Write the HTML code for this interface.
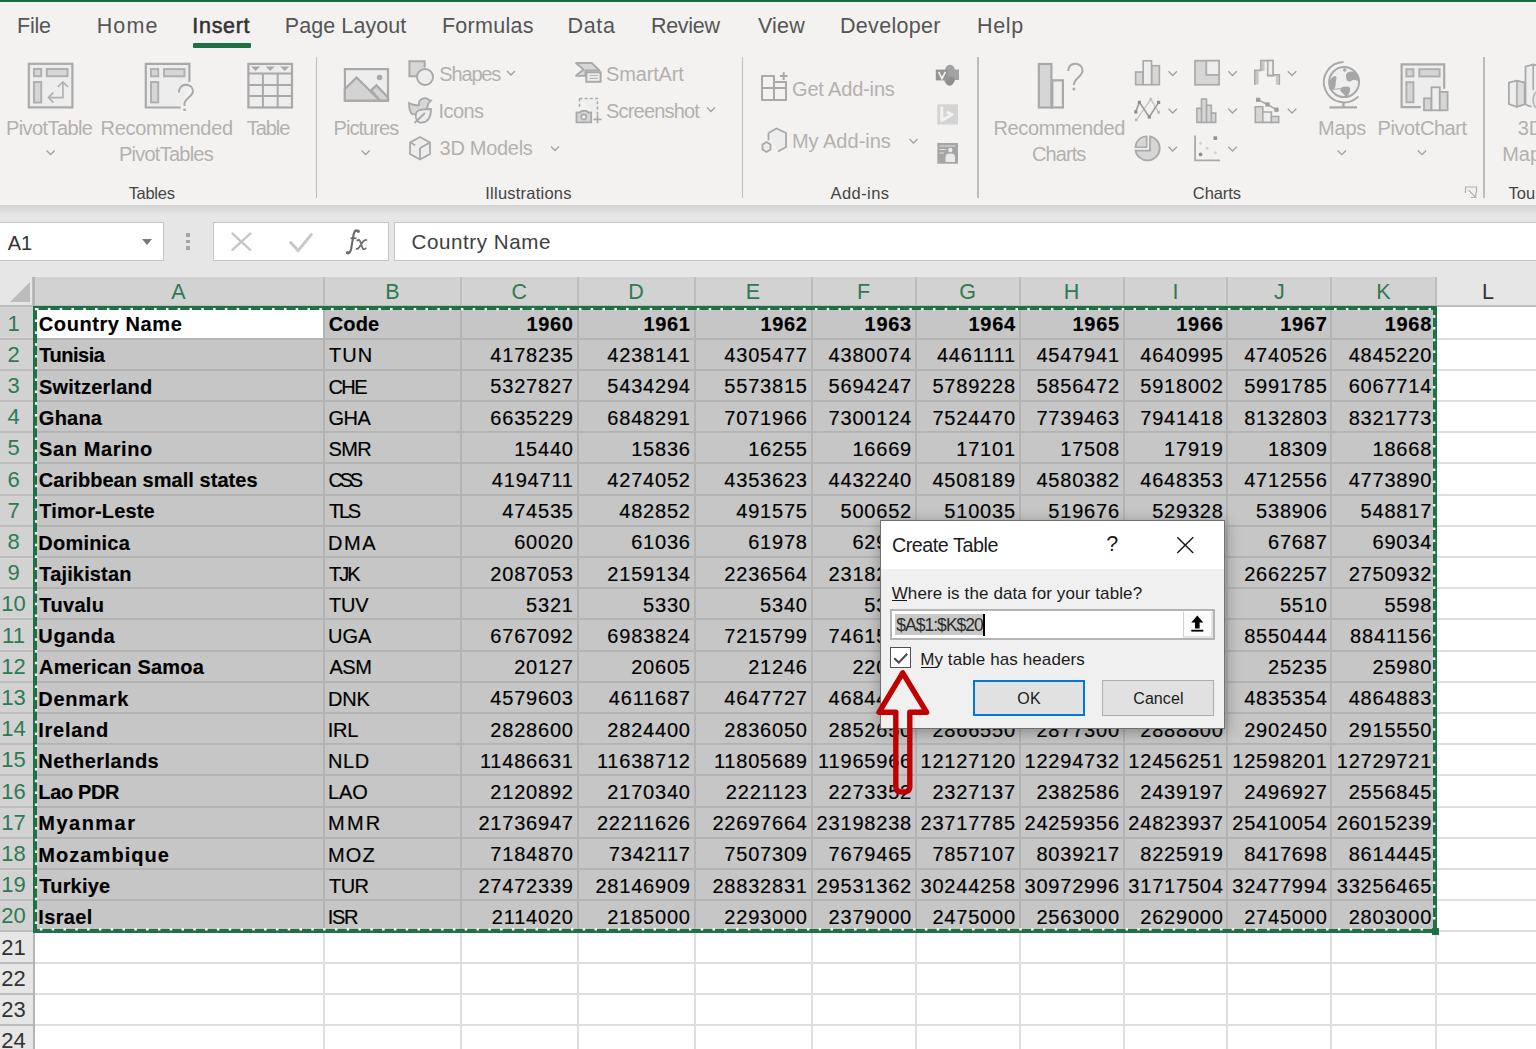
<!DOCTYPE html><html><head><meta charset="utf-8"><style>
*{margin:0;padding:0;box-sizing:border-box}
html,body{width:1536px;height:1049px;overflow:hidden;background:#fff;font-family:"Liberation Sans", sans-serif}
.a{position:absolute}
.t{position:absolute;white-space:nowrap}
.rb{color:#a8a8a8;font-size:19px}
.gl{color:#444;font-size:16.5px}
.tab{position:absolute;top:10px;font-size:21.5px;color:#484848;white-space:nowrap}
.cell{position:absolute;white-space:nowrap;font-size:20px;letter-spacing:1px;color:#000;-webkit-text-stroke:0.18px #000;height:31.2px;line-height:31.2px}
.b{font-weight:bold;-webkit-text-stroke:0.15px #000}
.rh{position:absolute;left:0;width:34px;font-size:22px;text-align:center;height:31.2px;line-height:31.2px}
.ch{position:absolute;top:277px;height:29px;line-height:30px;font-size:21.5px;text-align:center}
.sep{position:absolute;width:1.5px;background:#bebcba;top:57px;height:141px}
</style></head><body>

<div class="a" style="left:0;top:0;width:1536px;height:1.6px;background:#1e6b41"></div>
<div class="a" style="left:0;top:2px;width:1536px;height:203px;background:#f3f2f1"></div>
<div class="t" style="left:17.00px;top:15.50px;font-size:21.50px;line-height:21.50px;letter-spacing:-0.250px;color:#555;">File</div>
<div class="t" style="left:96.75px;top:15.50px;font-size:21.50px;line-height:21.50px;letter-spacing:1.083px;color:#555;">Home</div>
<div class="t" style="left:284.85px;top:15.50px;font-size:21.50px;line-height:21.50px;letter-spacing:0.065px;color:#555;">Page Layout</div>
<div class="t" style="left:441.95px;top:15.50px;font-size:21.50px;line-height:21.50px;letter-spacing:0.286px;color:#555;">Formulas</div>
<div class="t" style="left:567.55px;top:15.50px;font-size:21.50px;line-height:21.50px;letter-spacing:0.650px;color:#555;">Data</div>
<div class="t" style="left:650.95px;top:15.50px;font-size:21.50px;line-height:21.50px;letter-spacing:-0.290px;color:#555;">Review</div>
<div class="t" style="left:758.00px;top:15.50px;font-size:21.50px;line-height:21.50px;letter-spacing:0.167px;color:#555;">View</div>
<div class="t" style="left:839.95px;top:15.50px;font-size:21.50px;line-height:21.50px;letter-spacing:0.319px;color:#555;">Developer</div>
<div class="t" style="left:976.95px;top:15.50px;font-size:21.50px;line-height:21.50px;letter-spacing:0.667px;color:#555;">Help</div>
<div class="t" style="left:192.30px;top:15.50px;font-size:21.50px;line-height:21.50px;letter-spacing:0.700px;color:#333;-webkit-text-stroke:0.55px #333;">Insert</div>
<div class="a" style="left:193.4px;top:43px;width:57.3px;height:4.6px;background:#1e7145;border-radius:1px"></div>
<div class="sep" style="left:315.7px"></div>
<div class="sep" style="left:741.8px"></div>
<div class="sep" style="left:977.1px"></div>
<div class="sep" style="left:1483.0px"></div>
<div class="t" style="left:128.65px;top:184.53px;font-size:16.50px;line-height:16.50px;letter-spacing:-0.290px;color:#444;">Tables</div>
<div class="t" style="left:485.30px;top:184.53px;font-size:16.50px;line-height:16.50px;letter-spacing:0.225px;color:#444;">Illustrations</div>
<div class="t" style="left:830.60px;top:184.53px;font-size:16.50px;line-height:16.50px;letter-spacing:0.417px;color:#444;">Add-ins</div>
<div class="t" style="left:1192.85px;top:184.53px;font-size:16.50px;line-height:16.50px;letter-spacing:-0.110px;color:#444;">Charts</div>
<div class="t" style="left:1508.55px;top:184.53px;font-size:16.50px;line-height:16.50px;letter-spacing:0.000px;color:#444;">Tou</div>
<div class="t" style="left:6.00px;top:118.17px;font-size:20.00px;line-height:20.00px;letter-spacing:-0.594px;color:#b3b0ae;">PivotTable</div>
<div class="t" style="left:100.50px;top:118.17px;font-size:20.00px;line-height:20.00px;letter-spacing:-0.305px;color:#b3b0ae;">Recommended</div>
<div class="t" style="left:118.90px;top:143.97px;font-size:20.00px;line-height:20.00px;letter-spacing:-0.745px;color:#b3b0ae;">PivotTables</div>
<div class="t" style="left:246.80px;top:118.17px;font-size:20.00px;line-height:20.00px;letter-spacing:-1.088px;color:#b3b0ae;">Table</div>
<div class="t" style="left:333.50px;top:118.27px;font-size:20.00px;line-height:20.00px;letter-spacing:-0.943px;color:#b3b0ae;">Pictures</div>
<div class="t" style="left:439.30px;top:63.67px;font-size:20.00px;line-height:20.00px;letter-spacing:-1.160px;color:#b3b0ae;">Shapes</div>
<div class="t" style="left:438.55px;top:100.87px;font-size:20.00px;line-height:20.00px;letter-spacing:-0.588px;color:#b3b0ae;">Icons</div>
<div class="t" style="left:439.55px;top:138.37px;font-size:20.00px;line-height:20.00px;letter-spacing:-0.288px;color:#b3b0ae;">3D Models</div>
<div class="t" style="left:606.00px;top:63.67px;font-size:20.00px;line-height:20.00px;letter-spacing:-0.150px;color:#b3b0ae;">SmartArt</div>
<div class="t" style="left:606.00px;top:100.87px;font-size:20.00px;line-height:20.00px;letter-spacing:-0.806px;color:#b3b0ae;">Screenshot</div>
<div class="t" style="left:792.00px;top:79.27px;font-size:20.00px;line-height:20.00px;letter-spacing:-0.165px;color:#b3b0ae;">Get Add-ins</div>
<div class="t" style="left:791.90px;top:131.27px;font-size:20.00px;line-height:20.00px;letter-spacing:0.006px;color:#b3b0ae;">My Add-ins</div>
<div class="t" style="left:993.50px;top:118.17px;font-size:20.00px;line-height:20.00px;letter-spacing:-0.375px;color:#b3b0ae;">Recommended</div>
<div class="t" style="left:1032.00px;top:143.97px;font-size:20.00px;line-height:20.00px;letter-spacing:-0.910px;color:#b3b0ae;">Charts</div>
<div class="t" style="left:1318.10px;top:118.17px;font-size:20.00px;line-height:20.00px;letter-spacing:-0.250px;color:#b3b0ae;">Maps</div>
<div class="t" style="left:1377.50px;top:118.17px;font-size:20.00px;line-height:20.00px;letter-spacing:-0.417px;color:#b3b0ae;">PivotChart</div>
<div class="t" style="left:1517.75px;top:118.17px;font-size:20.00px;line-height:20.00px;letter-spacing:0.000px;color:#b3b0ae;">3D</div>
<div class="t" style="left:1502.20px;top:144.27px;font-size:20.00px;line-height:20.00px;letter-spacing:0.000px;color:#b3b0ae;">Maps</div>
<div class="a" style="left:0;top:205px;width:1536px;height:72px;background:#e6e6e6"></div>
<div class="a" style="left:0;top:205px;width:1536px;height:10px;background:linear-gradient(#d2d2d2,#e6e6e6)"></div>
<div class="a" style="left:-3px;top:222.3px;width:166.5px;height:38.5px;background:#fff;border:1.5px solid #c6c6c6"></div>
<div class="t" style="left:7.80px;top:232.57px;font-size:20.00px;line-height:20.00px;letter-spacing:-0.050px;color:#333;">A1</div>
<div class="a" style="left:142px;top:238.5px;width:0;height:0;border-left:5.2px solid transparent;border-right:5.2px solid transparent;border-top:6px solid #7a7a7a"></div>
<div class="a" style="left:186px;top:233.0px;width:3.5px;height:3.5px;background:#a6a6a6"></div>
<div class="a" style="left:186px;top:239.5px;width:3.5px;height:3.5px;background:#a6a6a6"></div>
<div class="a" style="left:186px;top:246.0px;width:3.5px;height:3.5px;background:#a6a6a6"></div>
<div class="a" style="left:212.5px;top:222.3px;width:176.5px;height:38.5px;background:#fff;border:1.5px solid #c6c6c6"></div>
<svg class="a" style="left:215px;top:222px" width="175" height="40"><path d="M17.5 11.6 L35.3 27.8 M35.3 11.6 L17.5 27.8" stroke="#c6c6c6" stroke-width="2.4" fill="none" stroke-linecap="round"/><path d="M75.6 20.5 L83.2 28.6 L96.3 12.5" stroke="#c8c8c8" stroke-width="3" fill="none" stroke-linecap="round" stroke-linejoin="round"/></svg>
<svg class="a" style="left:340px;top:222px" width="35" height="40"><path d="M17.6 8.5 C15.5 8 14.3 9.5 13.7 12 L11.2 26.5 C10.5 30 9.5 31.6 7.6 31.3" stroke="#6a6a6a" stroke-width="2.1" fill="none" stroke-linecap="round"/><path d="M10.5 16.3 H16.5" stroke="#6a6a6a" stroke-width="1.7"/><circle cx="18.3" cy="9.3" r="1.6" fill="#6a6a6a"/><circle cx="7.5" cy="30.5" r="1.6" fill="#6a6a6a"/><path d="M17.3 18.5 C18.5 17.5 19.5 17.5 20.2 19.5 L22.5 26 C23 27.3 24 27.7 25.8 26.3 M26.5 18 C25 17.5 24 18 22.5 20.5 L19.5 24.8 C18.5 26.5 17.5 27.3 16.5 26.8" stroke="#6a6a6a" stroke-width="1.7" fill="none" stroke-linecap="round"/></svg>
<div class="a" style="left:393.8px;top:222.3px;width:1150px;height:38.5px;background:#fff;border:1.5px solid #c6c6c6"></div>
<div class="t" style="left:411.50px;top:232.36px;font-size:20.60px;line-height:20.60px;letter-spacing:0.568px;color:#404040;">Country Name</div>
<div class="a" style="left:0;top:277px;width:1536px;height:30px;background:#e6e6e6"></div>
<div class="a" style="left:34px;top:277px;width:1401.8px;height:29px;background:#d2d2d2"></div>
<div class="a" style="left:0;top:306.7px;width:34px;height:624.0px;background:#d2d2d2"></div>
<div class="a" style="left:0;top:931.3px;width:34px;height:200px;background:#e6e6e6"></div>
<div class="a" style="left:34px;top:306.7px;width:1510px;height:750px;background:#fff"></div>
<div class="a" style="left:33.0px;top:307.3px;width:1402.8px;height:624.0px;background:#c6c6c6"></div>
<div class="a" style="left:33.0px;top:307.3px;width:291.0px;height:31.2px;background:#fff"></div>
<div class="a" style="left:35px;top:338px;width:1400.8px;height:2px;background:#b3b3b3"></div>
<div class="a" style="left:1435.8px;top:338px;width:200px;height:2px;background:#dedede"></div>
<div class="a" style="left:0;top:338px;width:34px;height:2px;background:#bcbcbc"></div>
<div class="a" style="left:35px;top:369px;width:1400.8px;height:2px;background:#b3b3b3"></div>
<div class="a" style="left:1435.8px;top:369px;width:200px;height:2px;background:#dedede"></div>
<div class="a" style="left:0;top:369px;width:34px;height:2px;background:#bcbcbc"></div>
<div class="a" style="left:35px;top:400px;width:1400.8px;height:2px;background:#b3b3b3"></div>
<div class="a" style="left:1435.8px;top:400px;width:200px;height:2px;background:#dedede"></div>
<div class="a" style="left:0;top:400px;width:34px;height:2px;background:#bcbcbc"></div>
<div class="a" style="left:35px;top:431px;width:1400.8px;height:2px;background:#b3b3b3"></div>
<div class="a" style="left:1435.8px;top:431px;width:200px;height:2px;background:#dedede"></div>
<div class="a" style="left:0;top:431px;width:34px;height:2px;background:#bcbcbc"></div>
<div class="a" style="left:35px;top:462px;width:1400.8px;height:2px;background:#b3b3b3"></div>
<div class="a" style="left:1435.8px;top:462px;width:200px;height:2px;background:#dedede"></div>
<div class="a" style="left:0;top:462px;width:34px;height:2px;background:#bcbcbc"></div>
<div class="a" style="left:35px;top:494px;width:1400.8px;height:2px;background:#b3b3b3"></div>
<div class="a" style="left:1435.8px;top:494px;width:200px;height:2px;background:#dedede"></div>
<div class="a" style="left:0;top:494px;width:34px;height:2px;background:#bcbcbc"></div>
<div class="a" style="left:35px;top:525px;width:1400.8px;height:2px;background:#b3b3b3"></div>
<div class="a" style="left:1435.8px;top:525px;width:200px;height:2px;background:#dedede"></div>
<div class="a" style="left:0;top:525px;width:34px;height:2px;background:#bcbcbc"></div>
<div class="a" style="left:35px;top:556px;width:1400.8px;height:2px;background:#b3b3b3"></div>
<div class="a" style="left:1435.8px;top:556px;width:200px;height:2px;background:#dedede"></div>
<div class="a" style="left:0;top:556px;width:34px;height:2px;background:#bcbcbc"></div>
<div class="a" style="left:35px;top:587px;width:1400.8px;height:2px;background:#b3b3b3"></div>
<div class="a" style="left:1435.8px;top:587px;width:200px;height:2px;background:#dedede"></div>
<div class="a" style="left:0;top:587px;width:34px;height:2px;background:#bcbcbc"></div>
<div class="a" style="left:35px;top:618px;width:1400.8px;height:2px;background:#b3b3b3"></div>
<div class="a" style="left:1435.8px;top:618px;width:200px;height:2px;background:#dedede"></div>
<div class="a" style="left:0;top:618px;width:34px;height:2px;background:#bcbcbc"></div>
<div class="a" style="left:35px;top:650px;width:1400.8px;height:2px;background:#b3b3b3"></div>
<div class="a" style="left:1435.8px;top:650px;width:200px;height:2px;background:#dedede"></div>
<div class="a" style="left:0;top:650px;width:34px;height:2px;background:#bcbcbc"></div>
<div class="a" style="left:35px;top:681px;width:1400.8px;height:2px;background:#b3b3b3"></div>
<div class="a" style="left:1435.8px;top:681px;width:200px;height:2px;background:#dedede"></div>
<div class="a" style="left:0;top:681px;width:34px;height:2px;background:#bcbcbc"></div>
<div class="a" style="left:35px;top:712px;width:1400.8px;height:2px;background:#b3b3b3"></div>
<div class="a" style="left:1435.8px;top:712px;width:200px;height:2px;background:#dedede"></div>
<div class="a" style="left:0;top:712px;width:34px;height:2px;background:#bcbcbc"></div>
<div class="a" style="left:35px;top:743px;width:1400.8px;height:2px;background:#b3b3b3"></div>
<div class="a" style="left:1435.8px;top:743px;width:200px;height:2px;background:#dedede"></div>
<div class="a" style="left:0;top:743px;width:34px;height:2px;background:#bcbcbc"></div>
<div class="a" style="left:35px;top:774px;width:1400.8px;height:2px;background:#b3b3b3"></div>
<div class="a" style="left:1435.8px;top:774px;width:200px;height:2px;background:#dedede"></div>
<div class="a" style="left:0;top:774px;width:34px;height:2px;background:#bcbcbc"></div>
<div class="a" style="left:35px;top:806px;width:1400.8px;height:2px;background:#b3b3b3"></div>
<div class="a" style="left:1435.8px;top:806px;width:200px;height:2px;background:#dedede"></div>
<div class="a" style="left:0;top:806px;width:34px;height:2px;background:#bcbcbc"></div>
<div class="a" style="left:35px;top:837px;width:1400.8px;height:2px;background:#b3b3b3"></div>
<div class="a" style="left:1435.8px;top:837px;width:200px;height:2px;background:#dedede"></div>
<div class="a" style="left:0;top:837px;width:34px;height:2px;background:#bcbcbc"></div>
<div class="a" style="left:35px;top:868px;width:1400.8px;height:2px;background:#b3b3b3"></div>
<div class="a" style="left:1435.8px;top:868px;width:200px;height:2px;background:#dedede"></div>
<div class="a" style="left:0;top:868px;width:34px;height:2px;background:#bcbcbc"></div>
<div class="a" style="left:35px;top:899px;width:1400.8px;height:2px;background:#b3b3b3"></div>
<div class="a" style="left:1435.8px;top:899px;width:200px;height:2px;background:#dedede"></div>
<div class="a" style="left:0;top:899px;width:34px;height:2px;background:#bcbcbc"></div>
<div class="a" style="left:35px;top:930px;width:1400.8px;height:2px;background:#b3b3b3"></div>
<div class="a" style="left:1435.8px;top:930px;width:200px;height:2px;background:#dedede"></div>
<div class="a" style="left:0;top:930px;width:34px;height:2px;background:#bcbcbc"></div>
<div class="a" style="left:35px;top:962px;width:1510px;height:2px;background:#dedede"></div>
<div class="a" style="left:0;top:962px;width:34px;height:2px;background:#bcbcbc"></div>
<div class="a" style="left:35px;top:993px;width:1510px;height:2px;background:#dedede"></div>
<div class="a" style="left:0;top:993px;width:34px;height:2px;background:#bcbcbc"></div>
<div class="a" style="left:35px;top:1024px;width:1510px;height:2px;background:#dedede"></div>
<div class="a" style="left:0;top:1024px;width:34px;height:2px;background:#bcbcbc"></div>
<div class="a" style="left:35px;top:1055px;width:1510px;height:2px;background:#dedede"></div>
<div class="a" style="left:0;top:1055px;width:34px;height:2px;background:#bcbcbc"></div>
<div class="a" style="left:32px;top:277px;width:2px;height:29.5px;background:#bdbdbd"></div>
<div class="a" style="left:323px;top:307.3px;width:2px;height:624.0px;background:#b3b3b3"></div>
<div class="a" style="left:323px;top:931.3px;width:2px;height:200px;background:#dedede"></div>
<div class="a" style="left:323px;top:277px;width:2px;height:29.5px;background:#bdbdbd"></div>
<div class="a" style="left:460px;top:307.3px;width:2px;height:624.0px;background:#b3b3b3"></div>
<div class="a" style="left:460px;top:931.3px;width:2px;height:200px;background:#dedede"></div>
<div class="a" style="left:460px;top:277px;width:2px;height:29.5px;background:#bdbdbd"></div>
<div class="a" style="left:577px;top:307.3px;width:2px;height:624.0px;background:#b3b3b3"></div>
<div class="a" style="left:577px;top:931.3px;width:2px;height:200px;background:#dedede"></div>
<div class="a" style="left:577px;top:277px;width:2px;height:29.5px;background:#bdbdbd"></div>
<div class="a" style="left:694px;top:307.3px;width:2px;height:624.0px;background:#b3b3b3"></div>
<div class="a" style="left:694px;top:931.3px;width:2px;height:200px;background:#dedede"></div>
<div class="a" style="left:694px;top:277px;width:2px;height:29.5px;background:#bdbdbd"></div>
<div class="a" style="left:811px;top:307.3px;width:2px;height:624.0px;background:#b3b3b3"></div>
<div class="a" style="left:811px;top:931.3px;width:2px;height:200px;background:#dedede"></div>
<div class="a" style="left:811px;top:277px;width:2px;height:29.5px;background:#bdbdbd"></div>
<div class="a" style="left:915px;top:307.3px;width:2px;height:624.0px;background:#b3b3b3"></div>
<div class="a" style="left:915px;top:931.3px;width:2px;height:200px;background:#dedede"></div>
<div class="a" style="left:915px;top:277px;width:2px;height:29.5px;background:#bdbdbd"></div>
<div class="a" style="left:1019px;top:307.3px;width:2px;height:624.0px;background:#b3b3b3"></div>
<div class="a" style="left:1019px;top:931.3px;width:2px;height:200px;background:#dedede"></div>
<div class="a" style="left:1019px;top:277px;width:2px;height:29.5px;background:#bdbdbd"></div>
<div class="a" style="left:1123px;top:307.3px;width:2px;height:624.0px;background:#b3b3b3"></div>
<div class="a" style="left:1123px;top:931.3px;width:2px;height:200px;background:#dedede"></div>
<div class="a" style="left:1123px;top:277px;width:2px;height:29.5px;background:#bdbdbd"></div>
<div class="a" style="left:1226px;top:307.3px;width:2px;height:624.0px;background:#b3b3b3"></div>
<div class="a" style="left:1226px;top:931.3px;width:2px;height:200px;background:#dedede"></div>
<div class="a" style="left:1226px;top:277px;width:2px;height:29.5px;background:#bdbdbd"></div>
<div class="a" style="left:1330px;top:307.3px;width:2px;height:624.0px;background:#b3b3b3"></div>
<div class="a" style="left:1330px;top:931.3px;width:2px;height:200px;background:#dedede"></div>
<div class="a" style="left:1330px;top:277px;width:2px;height:29.5px;background:#bdbdbd"></div>
<div class="a" style="left:1435px;top:307.3px;width:2px;height:624.0px;background:#b3b3b3"></div>
<div class="a" style="left:1435px;top:931.3px;width:2px;height:200px;background:#dedede"></div>
<div class="a" style="left:1435px;top:277px;width:2px;height:29.5px;background:#bdbdbd"></div>
<div class="a" style="left:0;top:305px;width:1536px;height:2px;background:#bdbdbd"></div>
<div class="a" style="left:33px;top:277px;width:2px;height:772px;background:#b4b4b4"></div>
<svg class="a" style="left:0;top:277px" width="34" height="30"><path d="M10 25 L30 25 L30 5 Z" fill="#bcbcbc"/></svg>
<div class="ch" style="left:178.5px;width:200px;margin-left:-100px;color:#2f7a52">A</div>
<div class="ch" style="left:392.5px;width:200px;margin-left:-100px;color:#2f7a52">B</div>
<div class="ch" style="left:519.2px;width:200px;margin-left:-100px;color:#2f7a52">C</div>
<div class="ch" style="left:636.0px;width:200px;margin-left:-100px;color:#2f7a52">D</div>
<div class="ch" style="left:753.0px;width:200px;margin-left:-100px;color:#2f7a52">E</div>
<div class="ch" style="left:863.6px;width:200px;margin-left:-100px;color:#2f7a52">F</div>
<div class="ch" style="left:967.7px;width:200px;margin-left:-100px;color:#2f7a52">G</div>
<div class="ch" style="left:1071.6px;width:200px;margin-left:-100px;color:#2f7a52">H</div>
<div class="ch" style="left:1175.5px;width:200px;margin-left:-100px;color:#2f7a52">I</div>
<div class="ch" style="left:1279.3px;width:200px;margin-left:-100px;color:#2f7a52">J</div>
<div class="ch" style="left:1383.5px;width:200px;margin-left:-100px;color:#2f7a52">K</div>
<div class="ch" style="left:1487.9px;width:200px;margin-left:-100px;color:#333">L</div>
<div class="rh" style="top:307.6px;color:#2f7a52;width:27px">1</div>
<div class="rh" style="top:338.8px;color:#2f7a52;width:27px">2</div>
<div class="rh" style="top:370.0px;color:#2f7a52;width:27px">3</div>
<div class="rh" style="top:401.2px;color:#2f7a52;width:27px">4</div>
<div class="rh" style="top:432.4px;color:#2f7a52;width:27px">5</div>
<div class="rh" style="top:463.6px;color:#2f7a52;width:27px">6</div>
<div class="rh" style="top:494.8px;color:#2f7a52;width:27px">7</div>
<div class="rh" style="top:526.0px;color:#2f7a52;width:27px">8</div>
<div class="rh" style="top:557.2px;color:#2f7a52;width:27px">9</div>
<div class="rh" style="top:588.4px;color:#2f7a52;width:27px">10</div>
<div class="rh" style="top:619.6px;color:#2f7a52;width:27px">11</div>
<div class="rh" style="top:650.8px;color:#2f7a52;width:27px">12</div>
<div class="rh" style="top:682.0px;color:#2f7a52;width:27px">13</div>
<div class="rh" style="top:713.2px;color:#2f7a52;width:27px">14</div>
<div class="rh" style="top:744.4px;color:#2f7a52;width:27px">15</div>
<div class="rh" style="top:775.6px;color:#2f7a52;width:27px">16</div>
<div class="rh" style="top:806.8px;color:#2f7a52;width:27px">17</div>
<div class="rh" style="top:838.0px;color:#2f7a52;width:27px">18</div>
<div class="rh" style="top:869.2px;color:#2f7a52;width:27px">19</div>
<div class="rh" style="top:900.4px;color:#2f7a52;width:27px">20</div>
<div class="rh" style="top:931.6px;color:#333;width:27px">21</div>
<div class="rh" style="top:962.8px;color:#333;width:27px">22</div>
<div class="rh" style="top:994.0px;color:#333;width:27px">23</div>
<div class="rh" style="top:1025.2px;color:#333;width:27px">24</div>
<div class="cell b" style="left:38.85px;top:314.27px;height:auto;line-height:20px;letter-spacing:0.568px">Country Name</div>
<div class="cell b" style="left:328.75px;top:314.27px;height:auto;line-height:20px;letter-spacing:0.150px">Code</div>
<div class="cell b" style="left:573.7px;top:309.0px;width:200px;text-align:right;margin-left:-200px;letter-spacing:0.70px">1960</div>
<div class="cell b" style="left:690.7px;top:309.0px;width:200px;text-align:right;margin-left:-200px;letter-spacing:0.70px">1961</div>
<div class="cell b" style="left:807.7px;top:309.0px;width:200px;text-align:right;margin-left:-200px;letter-spacing:0.70px">1962</div>
<div class="cell b" style="left:911.9px;top:309.0px;width:200px;text-align:right;margin-left:-200px;letter-spacing:0.70px">1963</div>
<div class="cell b" style="left:1015.8px;top:309.0px;width:200px;text-align:right;margin-left:-200px;letter-spacing:0.70px">1964</div>
<div class="cell b" style="left:1119.8px;top:309.0px;width:200px;text-align:right;margin-left:-200px;letter-spacing:0.70px">1965</div>
<div class="cell b" style="left:1223.6px;top:309.0px;width:200px;text-align:right;margin-left:-200px;letter-spacing:0.70px">1966</div>
<div class="cell b" style="left:1327.5px;top:309.0px;width:200px;text-align:right;margin-left:-200px;letter-spacing:0.70px">1967</div>
<div class="cell b" style="left:1432.0px;top:309.0px;width:200px;text-align:right;margin-left:-200px;letter-spacing:0.70px">1968</div>
<div class="cell b" style="left:39.35px;top:345.47px;height:auto;line-height:20px;letter-spacing:-0.500px">Tunisia</div>
<div class="cell" style="left:329.00px;top:345.47px;height:auto;line-height:20px;letter-spacing:1.100px">TUN</div>
<div class="cell" style="left:573.8px;top:340.2px;width:200px;text-align:right;margin-left:-200px;letter-spacing:0.80px">4178235</div>
<div class="cell" style="left:690.8px;top:340.2px;width:200px;text-align:right;margin-left:-200px;letter-spacing:0.80px">4238141</div>
<div class="cell" style="left:807.8px;top:340.2px;width:200px;text-align:right;margin-left:-200px;letter-spacing:0.80px">4305477</div>
<div class="cell" style="left:912.0px;top:340.2px;width:200px;text-align:right;margin-left:-200px;letter-spacing:0.80px">4380074</div>
<div class="cell" style="left:1015.9px;top:340.2px;width:200px;text-align:right;margin-left:-200px;letter-spacing:0.80px">4461111</div>
<div class="cell" style="left:1119.9px;top:340.2px;width:200px;text-align:right;margin-left:-200px;letter-spacing:0.80px">4547941</div>
<div class="cell" style="left:1223.7px;top:340.2px;width:200px;text-align:right;margin-left:-200px;letter-spacing:0.80px">4640995</div>
<div class="cell" style="left:1327.6px;top:340.2px;width:200px;text-align:right;margin-left:-200px;letter-spacing:0.80px">4740526</div>
<div class="cell" style="left:1432.1px;top:340.2px;width:200px;text-align:right;margin-left:-200px;letter-spacing:0.80px">4845220</div>
<div class="cell b" style="left:39.10px;top:376.67px;height:auto;line-height:20px;letter-spacing:0.190px">Switzerland</div>
<div class="cell" style="left:328.50px;top:376.67px;height:auto;line-height:20px;letter-spacing:-1.600px">CHE</div>
<div class="cell" style="left:573.8px;top:371.4px;width:200px;text-align:right;margin-left:-200px;letter-spacing:0.80px">5327827</div>
<div class="cell" style="left:690.8px;top:371.4px;width:200px;text-align:right;margin-left:-200px;letter-spacing:0.80px">5434294</div>
<div class="cell" style="left:807.8px;top:371.4px;width:200px;text-align:right;margin-left:-200px;letter-spacing:0.80px">5573815</div>
<div class="cell" style="left:912.0px;top:371.4px;width:200px;text-align:right;margin-left:-200px;letter-spacing:0.80px">5694247</div>
<div class="cell" style="left:1015.9px;top:371.4px;width:200px;text-align:right;margin-left:-200px;letter-spacing:0.80px">5789228</div>
<div class="cell" style="left:1119.9px;top:371.4px;width:200px;text-align:right;margin-left:-200px;letter-spacing:0.80px">5856472</div>
<div class="cell" style="left:1223.7px;top:371.4px;width:200px;text-align:right;margin-left:-200px;letter-spacing:0.80px">5918002</div>
<div class="cell" style="left:1327.6px;top:371.4px;width:200px;text-align:right;margin-left:-200px;letter-spacing:0.80px">5991785</div>
<div class="cell" style="left:1432.1px;top:371.4px;width:200px;text-align:right;margin-left:-200px;letter-spacing:0.80px">6067714</div>
<div class="cell b" style="left:38.85px;top:407.87px;height:auto;line-height:20px;letter-spacing:0.225px">Ghana</div>
<div class="cell" style="left:328.50px;top:407.87px;height:auto;line-height:20px;letter-spacing:-0.525px">GHA</div>
<div class="cell" style="left:573.8px;top:402.6px;width:200px;text-align:right;margin-left:-200px;letter-spacing:0.80px">6635229</div>
<div class="cell" style="left:690.8px;top:402.6px;width:200px;text-align:right;margin-left:-200px;letter-spacing:0.80px">6848291</div>
<div class="cell" style="left:807.8px;top:402.6px;width:200px;text-align:right;margin-left:-200px;letter-spacing:0.80px">7071966</div>
<div class="cell" style="left:912.0px;top:402.6px;width:200px;text-align:right;margin-left:-200px;letter-spacing:0.80px">7300124</div>
<div class="cell" style="left:1015.9px;top:402.6px;width:200px;text-align:right;margin-left:-200px;letter-spacing:0.80px">7524470</div>
<div class="cell" style="left:1119.9px;top:402.6px;width:200px;text-align:right;margin-left:-200px;letter-spacing:0.80px">7739463</div>
<div class="cell" style="left:1223.7px;top:402.6px;width:200px;text-align:right;margin-left:-200px;letter-spacing:0.80px">7941418</div>
<div class="cell" style="left:1327.6px;top:402.6px;width:200px;text-align:right;margin-left:-200px;letter-spacing:0.80px">8132803</div>
<div class="cell" style="left:1432.1px;top:402.6px;width:200px;text-align:right;margin-left:-200px;letter-spacing:0.80px">8321773</div>
<div class="cell b" style="left:39.10px;top:439.07px;height:auto;line-height:20px;letter-spacing:0.600px">San Marino</div>
<div class="cell" style="left:328.50px;top:439.07px;height:auto;line-height:20px;letter-spacing:-0.650px">SMR</div>
<div class="cell" style="left:573.8px;top:433.8px;width:200px;text-align:right;margin-left:-200px;letter-spacing:0.80px">15440</div>
<div class="cell" style="left:690.8px;top:433.8px;width:200px;text-align:right;margin-left:-200px;letter-spacing:0.80px">15836</div>
<div class="cell" style="left:807.8px;top:433.8px;width:200px;text-align:right;margin-left:-200px;letter-spacing:0.80px">16255</div>
<div class="cell" style="left:912.0px;top:433.8px;width:200px;text-align:right;margin-left:-200px;letter-spacing:0.80px">16669</div>
<div class="cell" style="left:1015.9px;top:433.8px;width:200px;text-align:right;margin-left:-200px;letter-spacing:0.80px">17101</div>
<div class="cell" style="left:1119.9px;top:433.8px;width:200px;text-align:right;margin-left:-200px;letter-spacing:0.80px">17508</div>
<div class="cell" style="left:1223.7px;top:433.8px;width:200px;text-align:right;margin-left:-200px;letter-spacing:0.80px">17919</div>
<div class="cell" style="left:1327.6px;top:433.8px;width:200px;text-align:right;margin-left:-200px;letter-spacing:0.80px">18309</div>
<div class="cell" style="left:1432.1px;top:433.8px;width:200px;text-align:right;margin-left:-200px;letter-spacing:0.80px">18668</div>
<div class="cell b" style="left:38.85px;top:470.27px;height:auto;line-height:20px;letter-spacing:0.040px">Caribbean small states</div>
<div class="cell" style="left:328.50px;top:470.27px;height:auto;line-height:20px;letter-spacing:-3.275px">CSS</div>
<div class="cell" style="left:573.8px;top:465.0px;width:200px;text-align:right;margin-left:-200px;letter-spacing:0.80px">4194711</div>
<div class="cell" style="left:690.8px;top:465.0px;width:200px;text-align:right;margin-left:-200px;letter-spacing:0.80px">4274052</div>
<div class="cell" style="left:807.8px;top:465.0px;width:200px;text-align:right;margin-left:-200px;letter-spacing:0.80px">4353623</div>
<div class="cell" style="left:912.0px;top:465.0px;width:200px;text-align:right;margin-left:-200px;letter-spacing:0.80px">4432240</div>
<div class="cell" style="left:1015.9px;top:465.0px;width:200px;text-align:right;margin-left:-200px;letter-spacing:0.80px">4508189</div>
<div class="cell" style="left:1119.9px;top:465.0px;width:200px;text-align:right;margin-left:-200px;letter-spacing:0.80px">4580382</div>
<div class="cell" style="left:1223.7px;top:465.0px;width:200px;text-align:right;margin-left:-200px;letter-spacing:0.80px">4648353</div>
<div class="cell" style="left:1327.6px;top:465.0px;width:200px;text-align:right;margin-left:-200px;letter-spacing:0.80px">4712556</div>
<div class="cell" style="left:1432.1px;top:465.0px;width:200px;text-align:right;margin-left:-200px;letter-spacing:0.80px">4773890</div>
<div class="cell b" style="left:39.35px;top:501.47px;height:auto;line-height:20px;letter-spacing:0.110px">Timor-Leste</div>
<div class="cell" style="left:329.00px;top:501.47px;height:auto;line-height:20px;letter-spacing:-2.275px">TLS</div>
<div class="cell" style="left:573.8px;top:496.2px;width:200px;text-align:right;margin-left:-200px;letter-spacing:0.80px">474535</div>
<div class="cell" style="left:690.8px;top:496.2px;width:200px;text-align:right;margin-left:-200px;letter-spacing:0.80px">482852</div>
<div class="cell" style="left:807.8px;top:496.2px;width:200px;text-align:right;margin-left:-200px;letter-spacing:0.80px">491575</div>
<div class="cell" style="left:912.0px;top:496.2px;width:200px;text-align:right;margin-left:-200px;letter-spacing:0.80px">500652</div>
<div class="cell" style="left:1015.9px;top:496.2px;width:200px;text-align:right;margin-left:-200px;letter-spacing:0.80px">510035</div>
<div class="cell" style="left:1119.9px;top:496.2px;width:200px;text-align:right;margin-left:-200px;letter-spacing:0.80px">519676</div>
<div class="cell" style="left:1223.7px;top:496.2px;width:200px;text-align:right;margin-left:-200px;letter-spacing:0.80px">529328</div>
<div class="cell" style="left:1327.6px;top:496.2px;width:200px;text-align:right;margin-left:-200px;letter-spacing:0.80px">538906</div>
<div class="cell" style="left:1432.1px;top:496.2px;width:200px;text-align:right;margin-left:-200px;letter-spacing:0.80px">548817</div>
<div class="cell b" style="left:38.35px;top:532.67px;height:auto;line-height:20px;letter-spacing:0.200px">Dominica</div>
<div class="cell" style="left:328.00px;top:532.67px;height:auto;line-height:20px;letter-spacing:1.525px">DMA</div>
<div class="cell" style="left:573.8px;top:527.4px;width:200px;text-align:right;margin-left:-200px;letter-spacing:0.80px">60020</div>
<div class="cell" style="left:690.8px;top:527.4px;width:200px;text-align:right;margin-left:-200px;letter-spacing:0.80px">61036</div>
<div class="cell" style="left:807.8px;top:527.4px;width:200px;text-align:right;margin-left:-200px;letter-spacing:0.80px">61978</div>
<div class="cell" style="left:912.0px;top:527.4px;width:200px;text-align:right;margin-left:-200px;letter-spacing:0.80px">62925</div>
<div class="cell" style="left:1015.9px;top:527.4px;width:200px;text-align:right;margin-left:-200px;letter-spacing:0.80px">63814</div>
<div class="cell" style="left:1119.9px;top:527.4px;width:200px;text-align:right;margin-left:-200px;letter-spacing:0.80px">64680</div>
<div class="cell" style="left:1223.7px;top:527.4px;width:200px;text-align:right;margin-left:-200px;letter-spacing:0.80px">65517</div>
<div class="cell" style="left:1327.6px;top:527.4px;width:200px;text-align:right;margin-left:-200px;letter-spacing:0.80px">67687</div>
<div class="cell" style="left:1432.1px;top:527.4px;width:200px;text-align:right;margin-left:-200px;letter-spacing:0.80px">69034</div>
<div class="cell b" style="left:39.35px;top:563.87px;height:auto;line-height:20px;letter-spacing:0.139px">Tajikistan</div>
<div class="cell" style="left:329.00px;top:563.87px;height:auto;line-height:20px;letter-spacing:-2.025px">TJK</div>
<div class="cell" style="left:573.8px;top:558.6px;width:200px;text-align:right;margin-left:-200px;letter-spacing:0.80px">2087053</div>
<div class="cell" style="left:690.8px;top:558.6px;width:200px;text-align:right;margin-left:-200px;letter-spacing:0.80px">2159134</div>
<div class="cell" style="left:807.8px;top:558.6px;width:200px;text-align:right;margin-left:-200px;letter-spacing:0.80px">2236564</div>
<div class="cell" style="left:912.0px;top:558.6px;width:200px;text-align:right;margin-left:-200px;letter-spacing:0.80px">2318291</div>
<div class="cell" style="left:1015.9px;top:558.6px;width:200px;text-align:right;margin-left:-200px;letter-spacing:0.80px">2403511</div>
<div class="cell" style="left:1119.9px;top:558.6px;width:200px;text-align:right;margin-left:-200px;letter-spacing:0.80px">2491620</div>
<div class="cell" style="left:1223.7px;top:558.6px;width:200px;text-align:right;margin-left:-200px;letter-spacing:0.80px">2578450</div>
<div class="cell" style="left:1327.6px;top:558.6px;width:200px;text-align:right;margin-left:-200px;letter-spacing:0.80px">2662257</div>
<div class="cell" style="left:1432.1px;top:558.6px;width:200px;text-align:right;margin-left:-200px;letter-spacing:0.80px">2750932</div>
<div class="cell b" style="left:39.35px;top:595.07px;height:auto;line-height:20px;letter-spacing:0.320px">Tuvalu</div>
<div class="cell" style="left:329.00px;top:595.07px;height:auto;line-height:20px;letter-spacing:-0.150px">TUV</div>
<div class="cell" style="left:573.8px;top:589.8px;width:200px;text-align:right;margin-left:-200px;letter-spacing:0.80px">5321</div>
<div class="cell" style="left:690.8px;top:589.8px;width:200px;text-align:right;margin-left:-200px;letter-spacing:0.80px">5330</div>
<div class="cell" style="left:807.8px;top:589.8px;width:200px;text-align:right;margin-left:-200px;letter-spacing:0.80px">5340</div>
<div class="cell" style="left:912.0px;top:589.8px;width:200px;text-align:right;margin-left:-200px;letter-spacing:0.80px">5354</div>
<div class="cell" style="left:1015.9px;top:589.8px;width:200px;text-align:right;margin-left:-200px;letter-spacing:0.80px">5370</div>
<div class="cell" style="left:1119.9px;top:589.8px;width:200px;text-align:right;margin-left:-200px;letter-spacing:0.80px">5395</div>
<div class="cell" style="left:1223.7px;top:589.8px;width:200px;text-align:right;margin-left:-200px;letter-spacing:0.80px">5451</div>
<div class="cell" style="left:1327.6px;top:589.8px;width:200px;text-align:right;margin-left:-200px;letter-spacing:0.80px">5510</div>
<div class="cell" style="left:1432.1px;top:589.8px;width:200px;text-align:right;margin-left:-200px;letter-spacing:0.80px">5598</div>
<div class="cell b" style="left:38.35px;top:626.27px;height:auto;line-height:20px;letter-spacing:0.590px">Uganda</div>
<div class="cell" style="left:328.00px;top:626.27px;height:auto;line-height:20px;letter-spacing:-0.025px">UGA</div>
<div class="cell" style="left:573.8px;top:621.0px;width:200px;text-align:right;margin-left:-200px;letter-spacing:0.80px">6767092</div>
<div class="cell" style="left:690.8px;top:621.0px;width:200px;text-align:right;margin-left:-200px;letter-spacing:0.80px">6983824</div>
<div class="cell" style="left:807.8px;top:621.0px;width:200px;text-align:right;margin-left:-200px;letter-spacing:0.80px">7215799</div>
<div class="cell" style="left:912.0px;top:621.0px;width:200px;text-align:right;margin-left:-200px;letter-spacing:0.80px">7461516</div>
<div class="cell" style="left:1015.9px;top:621.0px;width:200px;text-align:right;margin-left:-200px;letter-spacing:0.80px">7719540</div>
<div class="cell" style="left:1119.9px;top:621.0px;width:200px;text-align:right;margin-left:-200px;letter-spacing:0.80px">7987915</div>
<div class="cell" style="left:1223.7px;top:621.0px;width:200px;text-align:right;margin-left:-200px;letter-spacing:0.80px">8265424</div>
<div class="cell" style="left:1327.6px;top:621.0px;width:200px;text-align:right;margin-left:-200px;letter-spacing:0.80px">8550444</div>
<div class="cell" style="left:1432.1px;top:621.0px;width:200px;text-align:right;margin-left:-200px;letter-spacing:0.80px">8841156</div>
<div class="cell b" style="left:39.10px;top:657.47px;height:auto;line-height:20px;letter-spacing:0.185px">American Samoa</div>
<div class="cell" style="left:329.50px;top:657.47px;height:auto;line-height:20px;letter-spacing:-0.475px">ASM</div>
<div class="cell" style="left:573.8px;top:652.2px;width:200px;text-align:right;margin-left:-200px;letter-spacing:0.80px">20127</div>
<div class="cell" style="left:690.8px;top:652.2px;width:200px;text-align:right;margin-left:-200px;letter-spacing:0.80px">20605</div>
<div class="cell" style="left:807.8px;top:652.2px;width:200px;text-align:right;margin-left:-200px;letter-spacing:0.80px">21246</div>
<div class="cell" style="left:912.0px;top:652.2px;width:200px;text-align:right;margin-left:-200px;letter-spacing:0.80px">22029</div>
<div class="cell" style="left:1015.9px;top:652.2px;width:200px;text-align:right;margin-left:-200px;letter-spacing:0.80px">22850</div>
<div class="cell" style="left:1119.9px;top:652.2px;width:200px;text-align:right;margin-left:-200px;letter-spacing:0.80px">23675</div>
<div class="cell" style="left:1223.7px;top:652.2px;width:200px;text-align:right;margin-left:-200px;letter-spacing:0.80px">24473</div>
<div class="cell" style="left:1327.6px;top:652.2px;width:200px;text-align:right;margin-left:-200px;letter-spacing:0.80px">25235</div>
<div class="cell" style="left:1432.1px;top:652.2px;width:200px;text-align:right;margin-left:-200px;letter-spacing:0.80px">25980</div>
<div class="cell b" style="left:38.35px;top:688.67px;height:auto;line-height:20px;letter-spacing:0.725px">Denmark</div>
<div class="cell" style="left:328.00px;top:688.67px;height:auto;line-height:20px;letter-spacing:-0.150px">DNK</div>
<div class="cell" style="left:573.8px;top:683.4px;width:200px;text-align:right;margin-left:-200px;letter-spacing:0.80px">4579603</div>
<div class="cell" style="left:690.8px;top:683.4px;width:200px;text-align:right;margin-left:-200px;letter-spacing:0.80px">4611687</div>
<div class="cell" style="left:807.8px;top:683.4px;width:200px;text-align:right;margin-left:-200px;letter-spacing:0.80px">4647727</div>
<div class="cell" style="left:912.0px;top:683.4px;width:200px;text-align:right;margin-left:-200px;letter-spacing:0.80px">4684483</div>
<div class="cell" style="left:1015.9px;top:683.4px;width:200px;text-align:right;margin-left:-200px;letter-spacing:0.80px">4722072</div>
<div class="cell" style="left:1119.9px;top:683.4px;width:200px;text-align:right;margin-left:-200px;letter-spacing:0.80px">4759012</div>
<div class="cell" style="left:1223.7px;top:683.4px;width:200px;text-align:right;margin-left:-200px;letter-spacing:0.80px">4797381</div>
<div class="cell" style="left:1327.6px;top:683.4px;width:200px;text-align:right;margin-left:-200px;letter-spacing:0.80px">4835354</div>
<div class="cell" style="left:1432.1px;top:683.4px;width:200px;text-align:right;margin-left:-200px;letter-spacing:0.80px">4864883</div>
<div class="cell b" style="left:38.35px;top:719.87px;height:auto;line-height:20px;letter-spacing:0.700px">Ireland</div>
<div class="cell" style="left:327.75px;top:719.87px;height:auto;line-height:20px;letter-spacing:-0.275px">IRL</div>
<div class="cell" style="left:573.8px;top:714.6px;width:200px;text-align:right;margin-left:-200px;letter-spacing:0.80px">2828600</div>
<div class="cell" style="left:690.8px;top:714.6px;width:200px;text-align:right;margin-left:-200px;letter-spacing:0.80px">2824400</div>
<div class="cell" style="left:807.8px;top:714.6px;width:200px;text-align:right;margin-left:-200px;letter-spacing:0.80px">2836050</div>
<div class="cell" style="left:912.0px;top:714.6px;width:200px;text-align:right;margin-left:-200px;letter-spacing:0.80px">2852650</div>
<div class="cell" style="left:1015.9px;top:714.6px;width:200px;text-align:right;margin-left:-200px;letter-spacing:0.80px">2866550</div>
<div class="cell" style="left:1119.9px;top:714.6px;width:200px;text-align:right;margin-left:-200px;letter-spacing:0.80px">2877300</div>
<div class="cell" style="left:1223.7px;top:714.6px;width:200px;text-align:right;margin-left:-200px;letter-spacing:0.80px">2888800</div>
<div class="cell" style="left:1327.6px;top:714.6px;width:200px;text-align:right;margin-left:-200px;letter-spacing:0.80px">2902450</div>
<div class="cell" style="left:1432.1px;top:714.6px;width:200px;text-align:right;margin-left:-200px;letter-spacing:0.80px">2915550</div>
<div class="cell b" style="left:38.35px;top:751.07px;height:auto;line-height:20px;letter-spacing:0.480px">Netherlands</div>
<div class="cell" style="left:328.00px;top:751.07px;height:auto;line-height:20px;letter-spacing:0.600px">NLD</div>
<div class="cell" style="left:573.8px;top:745.8px;width:200px;text-align:right;margin-left:-200px;letter-spacing:0.80px">11486631</div>
<div class="cell" style="left:690.8px;top:745.8px;width:200px;text-align:right;margin-left:-200px;letter-spacing:0.80px">11638712</div>
<div class="cell" style="left:807.8px;top:745.8px;width:200px;text-align:right;margin-left:-200px;letter-spacing:0.80px">11805689</div>
<div class="cell" style="left:912.0px;top:745.8px;width:200px;text-align:right;margin-left:-200px;letter-spacing:0.80px">11965966</div>
<div class="cell" style="left:1015.9px;top:745.8px;width:200px;text-align:right;margin-left:-200px;letter-spacing:0.80px">12127120</div>
<div class="cell" style="left:1119.9px;top:745.8px;width:200px;text-align:right;margin-left:-200px;letter-spacing:0.80px">12294732</div>
<div class="cell" style="left:1223.7px;top:745.8px;width:200px;text-align:right;margin-left:-200px;letter-spacing:0.80px">12456251</div>
<div class="cell" style="left:1327.6px;top:745.8px;width:200px;text-align:right;margin-left:-200px;letter-spacing:0.80px">12598201</div>
<div class="cell" style="left:1432.1px;top:745.8px;width:200px;text-align:right;margin-left:-200px;letter-spacing:0.80px">12729721</div>
<div class="cell b" style="left:38.35px;top:782.27px;height:auto;line-height:20px;letter-spacing:-0.358px">Lao PDR</div>
<div class="cell" style="left:328.00px;top:782.27px;height:auto;line-height:20px;letter-spacing:-0.150px">LAO</div>
<div class="cell" style="left:573.8px;top:777.0px;width:200px;text-align:right;margin-left:-200px;letter-spacing:0.80px">2120892</div>
<div class="cell" style="left:690.8px;top:777.0px;width:200px;text-align:right;margin-left:-200px;letter-spacing:0.80px">2170340</div>
<div class="cell" style="left:807.8px;top:777.0px;width:200px;text-align:right;margin-left:-200px;letter-spacing:0.80px">2221123</div>
<div class="cell" style="left:912.0px;top:777.0px;width:200px;text-align:right;margin-left:-200px;letter-spacing:0.80px">2273352</div>
<div class="cell" style="left:1015.9px;top:777.0px;width:200px;text-align:right;margin-left:-200px;letter-spacing:0.80px">2327137</div>
<div class="cell" style="left:1119.9px;top:777.0px;width:200px;text-align:right;margin-left:-200px;letter-spacing:0.80px">2382586</div>
<div class="cell" style="left:1223.7px;top:777.0px;width:200px;text-align:right;margin-left:-200px;letter-spacing:0.80px">2439197</div>
<div class="cell" style="left:1327.6px;top:777.0px;width:200px;text-align:right;margin-left:-200px;letter-spacing:0.80px">2496927</div>
<div class="cell" style="left:1432.1px;top:777.0px;width:200px;text-align:right;margin-left:-200px;letter-spacing:0.80px">2556845</div>
<div class="cell b" style="left:38.35px;top:813.47px;height:auto;line-height:20px;letter-spacing:1.475px">Myanmar</div>
<div class="cell" style="left:328.00px;top:813.47px;height:auto;line-height:20px;letter-spacing:2.225px">MMR</div>
<div class="cell" style="left:573.8px;top:808.2px;width:200px;text-align:right;margin-left:-200px;letter-spacing:0.80px">21736947</div>
<div class="cell" style="left:690.8px;top:808.2px;width:200px;text-align:right;margin-left:-200px;letter-spacing:0.80px">22211626</div>
<div class="cell" style="left:807.8px;top:808.2px;width:200px;text-align:right;margin-left:-200px;letter-spacing:0.80px">22697664</div>
<div class="cell" style="left:912.0px;top:808.2px;width:200px;text-align:right;margin-left:-200px;letter-spacing:0.80px">23198238</div>
<div class="cell" style="left:1015.9px;top:808.2px;width:200px;text-align:right;margin-left:-200px;letter-spacing:0.80px">23717785</div>
<div class="cell" style="left:1119.9px;top:808.2px;width:200px;text-align:right;margin-left:-200px;letter-spacing:0.80px">24259356</div>
<div class="cell" style="left:1223.7px;top:808.2px;width:200px;text-align:right;margin-left:-200px;letter-spacing:0.80px">24823937</div>
<div class="cell" style="left:1327.6px;top:808.2px;width:200px;text-align:right;margin-left:-200px;letter-spacing:0.80px">25410054</div>
<div class="cell" style="left:1432.1px;top:808.2px;width:200px;text-align:right;margin-left:-200px;letter-spacing:0.80px">26015239</div>
<div class="cell b" style="left:38.35px;top:844.67px;height:auto;line-height:20px;letter-spacing:1.050px">Mozambique</div>
<div class="cell" style="left:328.00px;top:844.67px;height:auto;line-height:20px;letter-spacing:1.175px">MOZ</div>
<div class="cell" style="left:573.8px;top:839.4px;width:200px;text-align:right;margin-left:-200px;letter-spacing:0.80px">7184870</div>
<div class="cell" style="left:690.8px;top:839.4px;width:200px;text-align:right;margin-left:-200px;letter-spacing:0.80px">7342117</div>
<div class="cell" style="left:807.8px;top:839.4px;width:200px;text-align:right;margin-left:-200px;letter-spacing:0.80px">7507309</div>
<div class="cell" style="left:912.0px;top:839.4px;width:200px;text-align:right;margin-left:-200px;letter-spacing:0.80px">7679465</div>
<div class="cell" style="left:1015.9px;top:839.4px;width:200px;text-align:right;margin-left:-200px;letter-spacing:0.80px">7857107</div>
<div class="cell" style="left:1119.9px;top:839.4px;width:200px;text-align:right;margin-left:-200px;letter-spacing:0.80px">8039217</div>
<div class="cell" style="left:1223.7px;top:839.4px;width:200px;text-align:right;margin-left:-200px;letter-spacing:0.80px">8225919</div>
<div class="cell" style="left:1327.6px;top:839.4px;width:200px;text-align:right;margin-left:-200px;letter-spacing:0.80px">8417698</div>
<div class="cell" style="left:1432.1px;top:839.4px;width:200px;text-align:right;margin-left:-200px;letter-spacing:0.80px">8614445</div>
<div class="cell b" style="left:39.35px;top:875.87px;height:auto;line-height:20px;letter-spacing:0.175px">Turkiye</div>
<div class="cell" style="left:329.00px;top:875.87px;height:auto;line-height:20px;letter-spacing:-0.525px">TUR</div>
<div class="cell" style="left:573.8px;top:870.6px;width:200px;text-align:right;margin-left:-200px;letter-spacing:0.80px">27472339</div>
<div class="cell" style="left:690.8px;top:870.6px;width:200px;text-align:right;margin-left:-200px;letter-spacing:0.80px">28146909</div>
<div class="cell" style="left:807.8px;top:870.6px;width:200px;text-align:right;margin-left:-200px;letter-spacing:0.80px">28832831</div>
<div class="cell" style="left:912.0px;top:870.6px;width:200px;text-align:right;margin-left:-200px;letter-spacing:0.80px">29531362</div>
<div class="cell" style="left:1015.9px;top:870.6px;width:200px;text-align:right;margin-left:-200px;letter-spacing:0.80px">30244258</div>
<div class="cell" style="left:1119.9px;top:870.6px;width:200px;text-align:right;margin-left:-200px;letter-spacing:0.80px">30972996</div>
<div class="cell" style="left:1223.7px;top:870.6px;width:200px;text-align:right;margin-left:-200px;letter-spacing:0.80px">31717504</div>
<div class="cell" style="left:1327.6px;top:870.6px;width:200px;text-align:right;margin-left:-200px;letter-spacing:0.80px">32477994</div>
<div class="cell" style="left:1432.1px;top:870.6px;width:200px;text-align:right;margin-left:-200px;letter-spacing:0.80px">33256465</div>
<div class="cell b" style="left:38.35px;top:907.07px;height:auto;line-height:20px;letter-spacing:0.330px">Israel</div>
<div class="cell" style="left:327.75px;top:907.07px;height:auto;line-height:20px;letter-spacing:-1.275px">ISR</div>
<div class="cell" style="left:573.8px;top:901.8px;width:200px;text-align:right;margin-left:-200px;letter-spacing:0.80px">2114020</div>
<div class="cell" style="left:690.8px;top:901.8px;width:200px;text-align:right;margin-left:-200px;letter-spacing:0.80px">2185000</div>
<div class="cell" style="left:807.8px;top:901.8px;width:200px;text-align:right;margin-left:-200px;letter-spacing:0.80px">2293000</div>
<div class="cell" style="left:912.0px;top:901.8px;width:200px;text-align:right;margin-left:-200px;letter-spacing:0.80px">2379000</div>
<div class="cell" style="left:1015.9px;top:901.8px;width:200px;text-align:right;margin-left:-200px;letter-spacing:0.80px">2475000</div>
<div class="cell" style="left:1119.9px;top:901.8px;width:200px;text-align:right;margin-left:-200px;letter-spacing:0.80px">2563000</div>
<div class="cell" style="left:1223.7px;top:901.8px;width:200px;text-align:right;margin-left:-200px;letter-spacing:0.80px">2629000</div>
<div class="cell" style="left:1327.6px;top:901.8px;width:200px;text-align:right;margin-left:-200px;letter-spacing:0.80px">2745000</div>
<div class="cell" style="left:1432.1px;top:901.8px;width:200px;text-align:right;margin-left:-200px;letter-spacing:0.80px">2803000</div>
<div class="a" style="left:32.5px;top:306.1px;width:1404.3px;height:626.5px;border:4.3px solid #1e7145"></div>
<svg class="a" style="left:32.5px;top:306.1px" width="1404.3" height="626.5"><rect x="3.1" y="3.1" width="1398.1" height="620.3" fill="none" stroke="#fff" stroke-width="2.4" stroke-dasharray="2.5 9.3"/></svg>
<div class="a" style="left:1431.5px;top:927.8px;width:7.5px;height:7.5px;background:#1e7145;border-radius:0.5px"></div>
<svg class="a" style="left:0;top:0" width="1536" height="205" viewBox="0 0 1536 205">
<g fill="none" stroke="#a9a9a9" stroke-width="2.2" stroke-linejoin="miter">
<!-- PivotTable -->
<rect x="28.8" y="63.8" width="43.6" height="43.6" fill="#ededed"/>
<rect x="34" y="69" width="7.2" height="7.2" fill="#d6d6d6" stroke="#b0b0b0" stroke-width="2"/>
<rect x="46.8" y="69" width="20.7" height="7.2" fill="#d6d6d6" stroke="#b0b0b0" stroke-width="2"/>
<rect x="34" y="82" width="7.2" height="20.5" fill="#d6d6d6" stroke="#b0b0b0" stroke-width="2"/>
<path d="M48.5 97.6 H62.9 V82 M53.5 92.5 L48.5 97.6 L53.5 102.7 M57.8 87 L62.9 82 L68 87" stroke="#b2b2b2" stroke-width="1.7"/>
<!-- Recommended PivotTables -->
<path d="M180.6 107.5 H145.8 V63.9 H189.4 V82" fill="#ededed"/>
<rect x="151" y="69.1" width="7.2" height="7.2" fill="#d6d6d6" stroke="#b0b0b0" stroke-width="2"/>
<rect x="164" y="69.1" width="20.5" height="7.2" fill="#d6d6d6" stroke="#b0b0b0" stroke-width="2"/>
<rect x="151" y="82" width="7.2" height="20.4" fill="#d6d6d6" stroke="#b0b0b0" stroke-width="2"/>
<path d="M179 92.5 C179 87.5 182 84.8 186 84.8 C190 84.8 193 87.5 193 91.3 C193 96 186 98 184.5 103 V106" stroke-width="2"/>
<rect x="183.4" y="108.6" width="2.4" height="2.4" fill="#a9a9a9" stroke="none"/>
<!-- Table -->
<rect x="248.4" y="63.9" width="43.6" height="43.6" fill="#ededed"/>
<path d="M248.4 73.5 H292 M248.4 85 H292 M248.4 96.1 H292 M262.9 73.5 V107.5 M277.7 73.5 V107.5" stroke-width="2"/>
<path d="M251 66.5 H260.2 L255.6 71.1 Z M265.6 66.5 H274.8 L270.2 71.1 Z M280.2 66.5 H289.4 L284.8 71.1 Z" fill="#a9a9a9" stroke="none"/>
<!-- Pictures -->
<rect x="344.9" y="69.1" width="43.1" height="31.6" fill="#ededed"/>
<path d="M344.9 89 L356.5 77.5 L380.1 100.7 H344.9 Z" fill="#d3d3d3"/>
<path d="M371.2 90.1 L376.4 85.4 L388 97.5 V100.7 H380.1 Z" fill="#d3d3d3"/>
<circle cx="379.6" cy="77.5" r="2.8" fill="#a9a9a9" stroke="none"/>
<!-- Shapes -->
<path d="M418 76.2 H409.4 V61.2 H424.7 V67.5" fill="#d6d6d6" stroke-width="2"/>
<circle cx="425" cy="77" r="8" fill="#ededed" stroke-width="2"/>
<!-- Icons -->
<path d="M409 103 C411 104 414 106 419 105 C418 99 425 96 429 100 L431 100.5 L428 104 C428 107 426 110 423 111.5 C419 114 414 115 412 114 C410 112 409 107 409 103 Z" fill="#d6d6d6" stroke-width="1.8"/>
<path d="M416 118 C414 110 420 109 431 109 C431 114 430 122 422 122.5 C419 123 417 121 416 118 Z M414.5 123 L425 113" fill="#ededed" stroke-width="1.8"/>
<!-- 3D Models -->
<path d="M420 137 L430 142.5 V154 L420 159.5 L410 154 V142.5 Z" fill="#ededed" stroke-width="1.8"/><path d="M420 148 L430 142.5 M420 148 V159.5 M410.5 142.5 L415.2 145.2" stroke-width="1.8"/>
<!-- SmartArt -->
<path d="M576 63 H591.8 L599.5 70.5 H585.4 V75.8 H576 L583.5 69.5 Z" fill="#d6d6d6" stroke-width="1.8" stroke-linejoin="round"/>
<rect x="586.3" y="72.3" width="14.3" height="9.5" fill="#ededed" stroke-width="2"/>
<path d="M589.5 75.5 H598 M589.5 78.3 H598" stroke-width="1.2" stroke="#b8b8b8"/>
<!-- Screenshot -->
<path d="M579.5 98.5 H597.5 V117 M579.5 98.5 V109" stroke-dasharray="3 2.2" stroke-width="1.6" fill="#eeeeee"/>
<path d="M576.5 112.5 H580 L581.8 110.8 H586.5 L588.3 112.5 H591.2 V122.3 H576.5 Z" fill="#d6d6d6" stroke-width="1.8"/>
<circle cx="583.8" cy="117" r="2.6" fill="#ededed" stroke-width="1.6"/>
<path d="M593.5 119.3 H601.5 M597.5 115.3 V123.3" stroke-width="1.7"/>
<!-- Get Add-ins -->
<path d="M762 76 H774 V88 H762 Z M762 88 H774 V100 H762 Z M774 88 H786 V100 H774 Z" stroke-width="2"/>
<path d="M780 76 H787.5 M783.7 72.2 V80 M774 82 H786 V88" stroke-width="2"/>
<!-- My Add-ins -->
<path d="M768.5 133 L776.5 128.5 L786 133 V147 L778 151.5 M768.5 133 V140.5" fill="#ededed" stroke-width="1.8"/>
<path d="M762.5 144.5 L766.5 142 L770.5 144.5 V149.5 L766.5 152 L762.5 149.5 Z" fill="#ededed" stroke-width="1.8"/>
<!-- Visio -->
<path d="M945 69.5 C946 66 948 64.8 950 64.8 C952 64.8 954 66 955 69.5 H959 V80 H955 C954 83.5 952 85.5 949.5 85.5 C947 85.5 945 83.5 944 80 Z" fill="#a3a3a3" stroke="none"/>
<path d="M948 78 C949 76 953 76 955 79 C954 83 952 85.5 949.5 85.5 C947.5 85.5 946 83.5 945.5 81 Z" fill="#8f8f8f" stroke="none"/>
<rect x="935.8" y="69.6" width="12.2" height="10.8" fill="#959595" stroke="none"/>
<path d="M938.6 71.8 L942 78.6 L945.4 71.8" stroke="#f2f2f2" stroke-width="1.6"/>
<!-- Bing -->
<rect x="937.3" y="104.3" width="20.7" height="20.2" fill="#d4d4d4" stroke="none"/>
<path d="M941.8 106.8 V120.5 L952 114.5 L946.8 112.2" stroke="#f2f2f2" stroke-width="3" fill="none" stroke-linejoin="round"/>
<!-- People Graph -->
<rect x="937.3" y="143" width="20.7" height="20.7" fill="#a5a5a5" stroke="none"/>
<path d="M939.5 146 H955.5 M939.5 149.5 H946 M939.5 153 H944" stroke="#e0e0e0" stroke-width="1.2"/>
<circle cx="950.3" cy="150" r="2.2" fill="#eaeaea" stroke="none"/>
<path d="M945.5 162 V157 C945.5 154.5 947 153.5 950.3 153.5 C953.6 153.5 955 154.5 955 157 V162 Z" fill="#eaeaea" stroke="none"/>
<!-- Recommended Charts -->
<rect x="1038.8" y="64" width="12.6" height="43.5" fill="#d6d6d6"/>
<rect x="1052.3" y="80.3" width="10.6" height="27.2" fill="#eeeeee"/>
<path d="M1068.2 71 C1068.5 66 1071.5 63.8 1075.5 63.8 C1079.5 63.8 1082.6 66.5 1082.6 70.5 C1082.6 76.5 1073.8 78 1073.8 85" stroke-width="2"/>
<rect x="1072.6" y="87.8" width="2.6" height="2.6" fill="#a9a9a9" stroke="none"/>
<!-- Column chart -->
<rect x="1135.6" y="72" width="7.4" height="12.7" fill="#d6d6d6" stroke-width="1.6"/>
<rect x="1143.2" y="60.8" width="8.3" height="23.9" fill="#eeeeee" stroke-width="1.6"/>
<rect x="1151.8" y="65.7" width="7.6" height="19" fill="#d6d6d6" stroke-width="1.6"/>
<!-- Treemap -->
<rect x="1195" y="60.7" width="24.1" height="24.1" fill="#d6d6d6" stroke-width="1.7"/>
<rect x="1206.3" y="60.7" width="12.8" height="14.2" fill="#eeeeee" stroke-width="1.7"/>
<!-- Waterfall -->
<path d="M1254.9 85 V70.3 H1260.9 V60.6 H1273 V74.9 H1279.2 V85" stroke-width="1.8" fill="none"/>
<rect x="1255.8" y="71" width="2.8" height="13.5" fill="#c6c6c6" stroke="none"/>
<rect x="1261.8" y="61.4" width="2.8" height="9.5" fill="#c6c6c6" stroke="none"/>
<rect x="1267.7" y="60.6" width="5.3" height="15" fill="#eeeeee" stroke-width="1.6"/>
<path d="M1267.7 75.5 H1275" stroke-width="1.6"/>
<rect x="1275.9" y="75.8" width="2.6" height="8.8" fill="#c6c6c6" stroke="none"/>
<!-- Line chart -->
<path d="M1136.3 120 L1150.8 99.3 L1158.6 112.3" stroke-width="1.2" stroke="#bdbdbd"/>
<path d="M1135.7 111.8 L1139.4 102.4 L1149.3 117 L1158.6 102.4" stroke-width="1.6" stroke="#9a9a9a"/>
<rect x="1134.2" y="110.3" width="3.2" height="3.2" fill="#8e8e8e" stroke="none"/>
<rect x="1137.8" y="100.8" width="3.2" height="3.2" fill="#8e8e8e" stroke="none"/>
<rect x="1147.7" y="115.4" width="3.2" height="3.2" fill="#8e8e8e" stroke="none"/>
<rect x="1157" y="100.8" width="3.2" height="3.2" fill="#8e8e8e" stroke="none"/>
<rect x="1134.8" y="118.6" width="2.8" height="2.8" fill="#bdbdbd" stroke="none"/>
<rect x="1149.4" y="97.9" width="2.8" height="2.8" fill="#bdbdbd" stroke="none"/>
<rect x="1157.2" y="110.9" width="2.8" height="2.8" fill="#bdbdbd" stroke="none"/>
<!-- Histogram -->
<path d="M1196.9 122.4 V108.4 H1201.5 V122.4 Z M1201.5 122.4 V99 H1206.5 V122.4 Z M1206.5 122.4 V105.3 H1211.3 V122.4 Z M1211.3 122.4 V113.1 H1215.7 V122.4 Z" fill="#d6d6d6" stroke-width="1.6"/>
<!-- Combo -->
<path d="M1255.3 122.4 V106.8 H1262.8 V122.4 Z" fill="#d6d6d6" stroke-width="1.6"/>
<path d="M1262.8 122.4 V112 H1271.4 V122.4 Z" fill="#eeeeee" stroke-width="1.6"/>
<path d="M1271.4 122.4 V116.5 H1278.7 V122.4 Z" fill="#d6d6d6" stroke-width="1.6"/>
<path d="M1258.1 99.8 L1267.5 104.5 L1276.4 109.7" stroke-width="1.5"/>
<rect x="1256" y="97.7" width="4.3" height="4.2" fill="#9e9e9e" stroke="none"/>
<rect x="1265.4" y="102.4" width="4.3" height="4.2" fill="#9e9e9e" stroke="none"/>
<rect x="1274.3" y="107.6" width="4.3" height="4.2" fill="#9e9e9e" stroke="none"/>
<!-- Pie -->
<path d="M1150 136.3 A12.2 12.2 0 1 1 1135.5 150.6 H1150 Z" fill="#d6d6d6" stroke-width="1.8"/>
<path d="M1146.7 147.3 V136.2 A11.5 11.5 0 0 0 1135.4 147.3 Z" fill="#d6d6d6" stroke-width="1.6"/>
<!-- Scatter -->
<path d="M1195.1 135.5 V160.3 H1220" stroke-width="1.8"/>
<rect x="1213.5" y="136.3" width="3.6" height="3.6" fill="#909090" stroke="none"/>
<circle cx="1200.6" cy="154.4" r="1.9" fill="#909090" stroke="none"/>
<circle cx="1200.6" cy="143.3" r="1.5" fill="#d2d2d2" stroke="none"/>
<circle cx="1207.1" cy="148.2" r="1.5" fill="#d2d2d2" stroke="none"/>
<circle cx="1215.3" cy="152.8" r="1.5" fill="#d2d2d2" stroke="none"/>
<!-- Globe -->
<circle cx="1344.1" cy="82.1" r="15" fill="#eeeeee" stroke-width="2"/>
<path d="M1343.6 62 A20.2 20.2 0 1 0 1358.4 96.4" stroke-width="2"/>
<path d="M1343.4 102.3 V107 M1329.5 107.4 H1357" stroke-width="2.3"/>
<path d="M1346 76 C1346 72.5 1349 71 1352.5 71.5 C1356 72 1358.5 75 1359 78 C1359 80.5 1357.5 81.5 1355 80 C1353 79 1351.5 81.5 1349.5 81.5 C1347 81.5 1346 79 1346 76 Z" fill="#a6a6a6" stroke="none"/>
<circle cx="1344.7" cy="70" r="1.8" fill="#a6a6a6" stroke="none"/>
<path d="M1329 86 C1329 81 1331 77.5 1334.5 76 C1336.5 76 1337 78 1336 80.5 C1335.5 83 1336 85 1335 87.5 C1334 89.5 1332 91 1330.5 90.5 C1329.5 89.5 1329 88 1329 86 Z" fill="#a6a6a6" stroke="none"/>
<path d="M1340.2 89 C1341 87 1344 86.3 1347.5 86.5 C1350 86.8 1350.5 88.5 1350 91 C1349.5 93.5 1348 95 1347 97 C1345.5 97 1344.5 95.5 1343.5 94 C1341.5 92.5 1340 91 1340.2 89 Z" fill="#a6a6a6" stroke="none"/>
<path d="M1333.5 89.3 L1340.5 88.6" stroke-width="1"/>
<!-- PivotChart -->
<path d="M1420.8 107.2 H1401.6 V64.3 H1444.2 V88.8" fill="#ededed"/>
<rect x="1406.4" y="69.2" width="7" height="7.2" fill="#d6d6d6" stroke="#b0b0b0" stroke-width="2"/>
<rect x="1419.3" y="69.2" width="20.3" height="7.2" fill="#d6d6d6" stroke="#b0b0b0" stroke-width="2"/>
<rect x="1406.4" y="82.2" width="7" height="20" fill="#d6d6d6" stroke="#b0b0b0" stroke-width="2"/>
<rect x="1424" y="98.3" width="7.5" height="12" fill="#d6d6d6" stroke-width="1.8"/>
<rect x="1431.5" y="87.3" width="8.3" height="23" fill="#eeeeee" stroke-width="1.8"/>
<rect x="1439.8" y="91.9" width="7.8" height="18.4" fill="#d6d6d6" stroke-width="1.8"/>
<!-- 3D Maps partial -->
<path d="M1508.9 82.6 L1516.9 80.6 L1524.6 82.6 V104.2 L1516.9 106.8 L1508.9 104.2 Z" fill="#eeeeee" stroke-width="1.8"/>
<path d="M1516.9 106.8 V80.8 L1524.6 82.6 V104.2 Z" fill="#dcdcdc" stroke-width="1.6"/>
<path d="M1525.5 104.5 V66.6 L1533.2 64.4 L1540 66.6 V110 M1525.5 104.5 L1531.5 106.8" fill="#eeeeee" stroke-width="1.8"/>
<path d="M1533.2 64.6 V90" stroke-width="1.6"/>
<circle cx="1545" cy="100" r="12" fill="#e8e8e8" stroke="#b8b8b8" stroke-width="1.6"/>
<!-- dialog launcher -->
<path d="M1465.5 193 V187 H1476.5 V193 M1468.5 190 L1475.5 197.2 M1470.5 197.5 H1475.8 V192.5" stroke="#b0b0b0" stroke-width="1.2"/>
</g>
<!-- chevrons -->
<g fill="none" stroke="#a0a0a0" stroke-width="1.3">
<path d="M46.5 150.5 L50.6 154.5 L54.7 150.5"/>
<path d="M361.5 150.5 L365.6 154.5 L369.7 150.5"/>
<path d="M507 71 L511 75 L515 71"/>
<path d="M551 146.5 L555 150.5 L559 146.5"/>
<path d="M707 107.5 L711 111.5 L715 107.5"/>
<path d="M909.5 139 L913.5 143 L917.5 139"/>
<path d="M1168.5 71.3 L1172.7 75.5 L1177 71.3"/>
<path d="M1228.3 71.3 L1232.5 75.5 L1236.8 71.3"/>
<path d="M1287.8 71.3 L1292 75.5 L1296.3 71.3"/>
<path d="M1168.5 108.8 L1172.7 113 L1177 108.8"/>
<path d="M1228.3 108.8 L1232.5 113 L1236.8 108.8"/>
<path d="M1287.8 108.8 L1292 113 L1296.3 108.8"/>
<path d="M1168.5 146.8 L1172.7 151 L1177 146.8"/>
<path d="M1228.3 146.8 L1232.5 151 L1236.8 146.8"/>
<path d="M1337.6 150.5 L1341.8 154.7 L1346 150.5"/>
<path d="M1417.8 150.5 L1422 154.7 L1426.2 150.5"/>
</g>
</svg>

<div class="a" style="left:879.8px;top:519.8px;width:345.4px;height:208.8px;background:#f0f0f0;border:1px solid #707070;box-shadow:1px 3px 13px 1px rgba(0,0,0,0.3)"></div>
<div class="a" style="left:880.8px;top:520.8px;width:343.4px;height:48.0px;background:#fff"></div>
<div class="t" style="left:891.90px;top:535.52px;font-size:19.70px;line-height:19.70px;letter-spacing:-0.432px;color:#1a1a1a;">Create Table</div>
<div class="t" style="left:1106.20px;top:534.40px;font-size:21.50px;line-height:21.50px;letter-spacing:0.000px;color:#1a1a1a;">?</div>
<svg class="a" style="left:1170px;top:530px" width="30" height="30"><path d="M7.3 7.3 L23.2 23 M23.2 7.3 L7.3 23" stroke="#1a1a1a" stroke-width="1.5" fill="none"/></svg>
<div class="t" style="left:891.70px;top:584.61px;font-size:17.00px;line-height:17.00px;letter-spacing:0.119px;color:#1a1a1a;">Where is the data for your table?</div>
<div class="a" style="left:891.7px;top:600.2px;width:15.8px;height:1.2px;background:#1a1a1a"></div>
<div class="a" style="left:890px;top:608.7px;width:324.7px;height:31.7px;background:#fff;border:2px solid #b4b4b4"></div>
<div class="a" style="left:1182.7px;top:610.7px;width:30px;height:27.7px;background:#fbfbfb;border-left:1.5px solid #d0d0d0;border-top:1.5px solid #fff;border-right:2.5px solid #e3e3e3;border-bottom:2.5px solid #e3e3e3"></div>
<svg class="a" style="left:1185px;top:610px" width="26" height="26"><path d="M12.3 5.5 L18.3 12.5 H14.6 V18.5 H10 V12.5 H6.3 Z" fill="#000"/><rect x="6.3" y="19.8" width="12" height="1.8" fill="#000"/></svg>
<div class="a" style="left:895.3px;top:614px;width:88.1px;height:21.4px;background:#c8c8c8"></div>
<div class="t" style="left:896.25px;top:616.59px;font-size:17.50px;line-height:17.50px;letter-spacing:-0.972px;color:#2a2a2a;">$A$1:$K$20</div>
<div class="a" style="left:983.2px;top:613.5px;width:1.4px;height:22px;background:#000"></div>
<div class="a" style="left:890px;top:647.4px;width:21px;height:20.4px;background:#fff;border:1.6px solid #505050"></div>
<svg class="a" style="left:890px;top:647px" width="22" height="22"><path d="M4.3 11.3 L8.8 15.6 L17.2 6.8" stroke="#4a4a4a" stroke-width="2.1" fill="none"/></svg>
<div class="t" style="left:920.15px;top:651.01px;font-size:17.00px;line-height:17.00px;letter-spacing:0.113px;color:#1a1a1a;">My table has headers</div>
<div class="a" style="left:921.4px;top:666.6px;width:15.5px;height:1.2px;background:#1a1a1a"></div>
<div class="a" style="left:973.2px;top:679.7px;width:112px;height:36.3px;background:#e1e1e1;border:2.2px solid #0078d7"></div>
<div class="t" style="left:1017.25px;top:690.76px;font-size:16.00px;line-height:16.00px;letter-spacing:0.250px;color:#1a1a1a;">OK</div>
<div class="a" style="left:1102px;top:679.7px;width:112px;height:36.3px;background:#e1e1e1;border:1.2px solid #adadad"></div>
<div class="t" style="left:1133.25px;top:690.76px;font-size:16.00px;line-height:16.00px;letter-spacing:0.080px;color:#1a1a1a;">Cancel</div>
<svg class="a" style="left:860px;top:660px" width="90" height="150"><path d="M42.7 12.8 L19 52.3 H35.8 V127 Q35.8 132 42.8 132 Q49.8 132 49.8 127 V52.3 H66.7 Z" fill="none" stroke="#c00000" stroke-width="5.4" stroke-linejoin="round"/></svg>
</body></html>
